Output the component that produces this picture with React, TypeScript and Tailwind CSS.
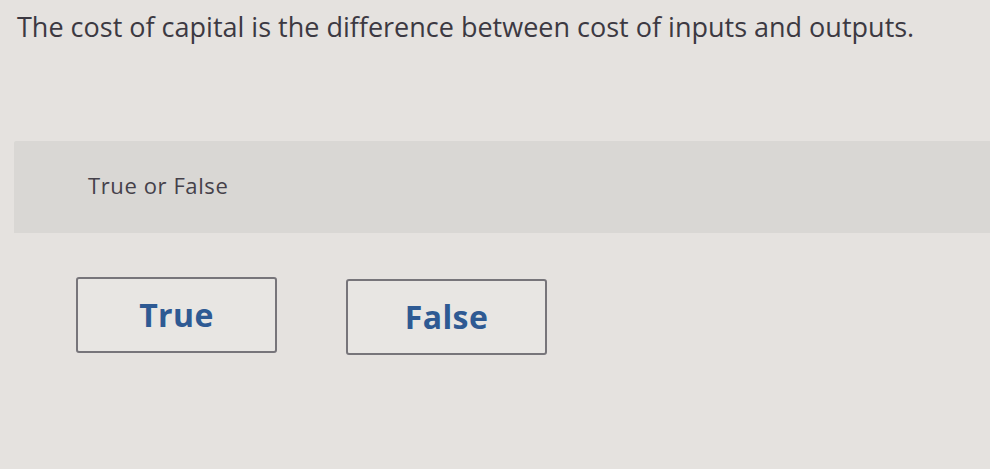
import React from 'react';

const options = ['True', 'False'];

export default function App() {
  return (
    <div className="w-[990px] h-[469px] overflow-hidden bg-[#e5e2df] text-[#3c3942]" style={{ fontFamily: '"Open Sans", Lato, sans-serif' }}>
      <h1 className="pl-[17px] pt-[8px] text-[27px] leading-[38px]">
        The cost of capital is the difference between cost of inputs and outputs.
      </h1>

      <div className="mt-[95px] ml-[14px] h-[92px] bg-[#d9d7d4] flex items-center pl-[74px] pb-[4px] rounded-tl-[2px]">
        <span className="text-[22px] tracking-[0.6px] text-[#45414a]">True or False</span>
      </div>

      <div className="flex gap-[69px] pl-[76px] pt-[44px]">
        {options.map((opt, i) => (
          <button
            key={opt}
            className={`w-[201px] h-[76px] rounded-[3px] border-2 border-[#77757a] bg-[#e8e6e3] text-[32px] tracking-[0.4px] font-bold text-[#2e5a93] ${i === 1 ? 'mt-[2px]' : ''}`}
          >
            {opt}
          </button>
        ))}
      </div>
    </div>
  );
}
